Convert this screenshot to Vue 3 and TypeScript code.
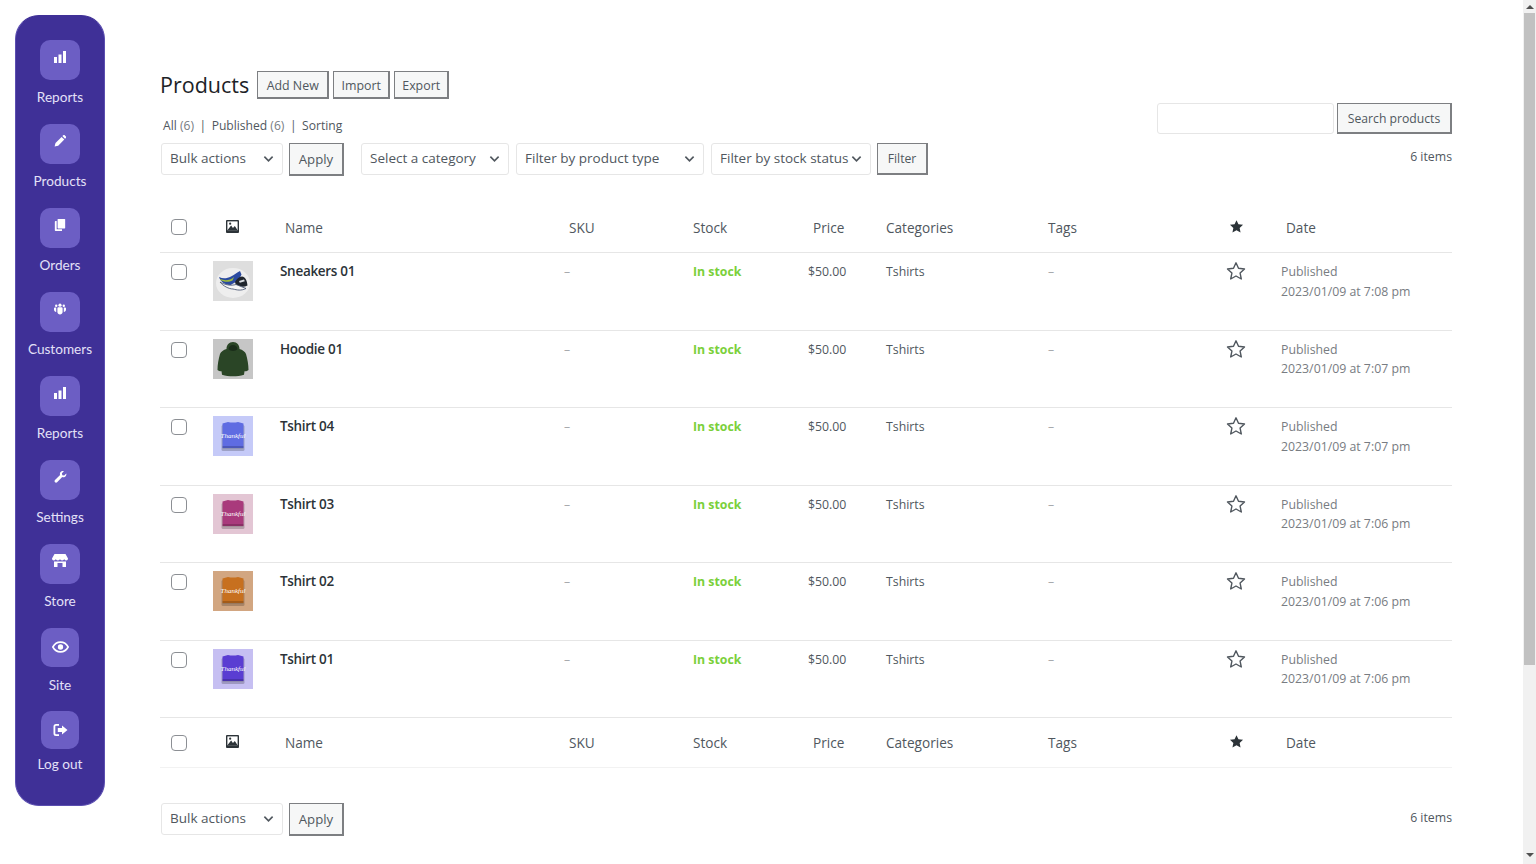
<script setup lang="ts">
interface Product {
  name: string
  date: string
  kind: 'sneaker' | 'hoodie' | 'shirt'
  bg?: string
  shirt?: string
}

const products: Product[] = [
  { name: 'Sneakers 01', date: '2023/01/09 at 7:08 pm', kind: 'sneaker' },
  { name: 'Hoodie 01', date: '2023/01/09 at 7:07 pm', kind: 'hoodie' },
  { name: 'Tshirt 04', date: '2023/01/09 at 7:07 pm', kind: 'shirt', bg: '#c5caf8', shirt: '#5f6ce2' },
  { name: 'Tshirt 03', date: '2023/01/09 at 7:06 pm', kind: 'shirt', bg: '#e3c6d4', shirt: '#a93a7c' },
  { name: 'Tshirt 02', date: '2023/01/09 at 7:06 pm', kind: 'shirt', bg: '#d2a681', shirt: '#c7701f' },
  { name: 'Tshirt 01', date: '2023/01/09 at 7:06 pm', kind: 'shirt', bg: '#c6bff2', shirt: '#5a3dd2' },
]

const nav = [
  { label: 'Reports', icon: 'bars' },
  { label: 'Products', icon: 'pencil' },
  { label: 'Orders', icon: 'copy' },
  { label: 'Customers', icon: 'users' },
  { label: 'Reports', icon: 'bars' },
  { label: 'Settings', icon: 'wrench' },
  { label: 'Store', icon: 'store' },
  { label: 'Site', icon: 'eye' },
  { label: 'Log out', icon: 'logout' },
]
</script>

<template>
  <div class="page">
    <aside class="sidebar">
      <a
        v-for="(item, i) in nav"
        :key="i"
        class="nav-item"
        :class="{ 'nav-store': item.icon === 'store', 'nav-site': item.icon === 'eye', 'nav-logout': item.icon === 'logout' }"
      >
        <span class="nav-btn">
          <svg v-if="item.icon === 'bars'" class="nav-icon" viewBox="0 0 12 12" fill="currentColor">
            <rect x="0" y="6" width="3" height="6" />
            <rect x="4.5" y="3.5" width="3" height="8.5" />
            <rect x="9" y="0" width="3" height="12" />
          </svg>
          <svg v-else-if="item.icon === 'pencil'" class="nav-icon" viewBox="0 0 12 12" fill="currentColor">
            <path d="M7.6 1.9 10.3 4.6 4.2 10.7.6 11.6l.9-3.6zM8.4 1.1l.9-.8c.4-.4 1-.4 1.4 0l1.2 1.2c.4.4.4 1 0 1.400l-.9.9z" />
          </svg>
          <svg v-else-if="item.icon === 'copy'" class="nav-icon" viewBox="0 0 12 13" fill="currentColor">
            <path d="M4 0h7a.6.6 0 0 1 .6.6v9a.6.6 0 0 1-.6.6H4a.6.6 0 0 1-.6-.6V.6A.6.6 0 0 1 4 0z" />
            <path d="M2.4 2.2v9h5.8V13H1.200a.8.8 0 0 1-.8-.8V3c0-.4.3-.8.8-.8z" />
          </svg>
          <svg v-else-if="item.icon === 'users'" class="nav-icon" viewBox="0 0 12 11" fill="currentColor">
            <circle cx="6" cy="1.7" r="1.6" />
            <circle cx="2.2" cy="2.3" r="1.2" />
            <circle cx="9.8" cy="2.3" r="1.2" />
            <path d="M4.3 3.8h3.4c.5 0 .9.4.9.9v3.8c0 1.4-1.2 2.5-2.6 2.5s-2.6-1.100-2.6-2.500V4.700c0-.5.4-.9.9-.9z" />
            <path d="M.8 4h1.400v4.500C1 8.300 0 7.300 0 6V4.800C0 4.400.4 4 .8 4zM11.200 4H9.800v4.500c1.200-.2 2.200-1.200 2.200-2.500V4.800c0-.4-.4-.8-.8-.8z" />
          </svg>
          <svg v-else-if="item.icon === 'wrench'" class="nav-icon nav-icon-lg" viewBox="0 0 12 12" fill="currentColor">
            <path d="M11.8 2.6 9.7 4.6 7.8 4.200 7.400 2.300 9.400.2C7.900-.3 6.300.3 5.700 1.600c-.4.8-.4 1.700-.1 2.400L.5 9.100c-.6.6-.6 1.500 0 2.100.6.6 1.600.6 2.100 0l5.100-5.100c.8.3 1.700.3 2.500-.1 1.300-.7 1.900-2.100 1.600-3.400z" />
          </svg>
          <svg v-else-if="item.icon === 'store'" class="nav-icon nav-icon-store" viewBox="0 0 16 13" fill="currentColor">
            <path d="M2.5 0h11L16 4.500c0 1.100-.8 2-1.900 2-.9 0-1.700-.6-1.900-1.400-.2.8-1 1.400-2.100 1.400S8.200 5.900 8 5.100c-.2.8-1 1.400-2.100 1.400S4 5.900 3.800 5.100C3.600 5.900 2.800 6.500 1.900 6.500 .8 6.500 0 5.600 0 4.500z" />
            <path d="M2 7.500h12V13h-3.500V9h-5v4H2z" />
          </svg>
          <svg v-else-if="item.icon === 'eye'" class="nav-icon nav-icon-eye" viewBox="0 0 16 11" fill="none" stroke="currentColor">
            <path d="M.8 5.500C2.500 2.400 5 .9 8 .9s5.500 1.500 7.200 4.600C13.500 8.600 11 10.100 8 10.100S2.500 8.600.8 5.500z" stroke-width="1.5" />
            <circle cx="8" cy="5.5" r="2.5" fill="currentColor" stroke="none" />
          </svg>
          <svg v-else class="nav-icon nav-icon-out" viewBox="0 0 14 12" fill="currentColor">
            <path d="M5.500 0v1.700H2.800c-.6 0-1 .4-1 1v6.600c0 .6.4 1 1 1h2.700V12H2.500A2.500 2.500 0 0 1 0 9.500v-7A2.500 2.500 0 0 1 2.500 0z" />
            <path d="M8.500 1.400 14 6l-5.500 4.600V7.900H4.300V4.100h4.200z" />
          </svg>
        </span>
        <span class="nav-label">{{ item.label }}</span>
      </a>
    </aside>

    <main class="content">
      <div class="top">
        <div class="top-left">
          <div class="title-row">
            <h1>Products</h1>
            <button class="btn btn-title w-add">Add New</button>
            <button class="btn btn-title w-import">Import</button>
            <button class="btn btn-title w-export">Export</button>
          </div>
          <ul class="views">
            <li class="view">All <span class="count">(6)</span></li>
            <li class="sep">|</li>
            <li class="view">Published <span class="count">(6)</span></li>
            <li class="sep">|</li>
            <li class="view">Sorting</li>
          </ul>
          <div class="filters">
            <select class="select w-bulk"><option>Bulk actions</option></select>
            <button class="btn btn-apply">Apply</button>
            <select class="select w-cat"><option>Select a category</option></select>
            <select class="select w-type"><option>Filter by product type</option></select>
            <select class="select w-stock"><option>Filter by stock status</option></select>
            <button class="btn btn-filter">Filter</button>
          </div>
        </div>
        <div class="top-right">
          <div class="search">
            <input class="search-input" type="search" />
            <button class="btn btn-search">Search products</button>
          </div>
          <div class="items">6 items</div>
        </div>
      </div>

      <div class="table">
        <div class="row head">
          <span class="cell"><span class="check" /></span>
          <span class="cell"><svg class="img-icon" viewBox="0 0 14 14">
            <rect width="14" height="14" rx="1" fill="#2c3338" />
            <rect x="1.5" y="1.5" width="11" height="9.5" fill="#fff" />
            <path d="M1.500 11 5.500 6 7.500 8.500 9.500 6.500 12.500 11z" fill="#2c3338" />
            <circle cx="4.5" cy="4" r="1.2" fill="#2c3338" />
          </svg></span>
          <span class="cell pad">Name</span>
          <span class="cell pad">SKU</span>
          <span class="cell">Stock</span>
          <span class="cell pad">Price</span>
          <span class="cell">Categories</span>
          <span class="cell">Tags</span>
          <span class="cell"><svg class="head-star" viewBox="0 0 20 20"><path d="M10 1.500l2.600 5.600 6.100.7-4.500 4.200 1.200 6-5.400-3-5.400 3 1.200-6L1.300 7.800l6.100-.7z" fill="#2c3338" /></svg></span>
          <span class="cell pad">Date</span>
        </div>

        <div v-for="p in products" :key="p.name" class="row item">
          <span class="cell"><span class="check" /></span>
          <span class="cell">
            <svg class="thumb" viewBox="0 0 40 40">
              <template v-if="p.kind === 'sneaker'">
                <rect width="40" height="40" fill="#dedede" />
                <ellipse cx="20" cy="22" rx="17" ry="15" fill="#eeeeee" />
                <path d="M6 16c4 2 8 1.500 12-.5 3-1.500 6-4 9-5.500l1.500 3.500-3 6-8 4.500c-5 0-10-3-11.500-8z" fill="#2b4aa0" />
                <path d="M7 18c5 2 10 1.500 14-2l-1.500 3.500c-4 2-9 1.500-12-.5z" fill="#9dbb3a" />
                <path d="M22 21c1.500-3 4-5.500 7-5.500 3 0 5 3.500 5.500 9-3 1.500-6 1.500-8 .5-2.500 0-4-1-4.500-4z" fill="#20262e" />
                <path d="M26 20l5-1.500 .8 1.800-5 1.500z" fill="#d9dde2" />
                <path d="M7 21c5 3 11 4 16 2.500l10 4c-5 2.500-9 1.500-13 .5-4 0-10-3-13-7z" fill="#f7f7f7" stroke="#3c4a6a" stroke-width=".8" />
              </template>
              <template v-else-if="p.kind === 'hoodie'">
                <rect width="40" height="40" fill="#c6c6c6" />
                <path d="M20 3c4 0 6.500 3 6.500 7 3 1 5.500 2.500 6.500 5 1.500 5 2.500 11 2.500 16-1.300 1.200-2.800 1.500-4 1.200l-.5 3.500c-7 2-15 2-22 0l-.5-3.500c-1.200.3-2.700 0-4-1.200C4.500 26 5.500 20 7 15c1-2.500 3.500-4 6.500-5C13.500 6 16 3 20 3z" fill="#2a4526" />
                <path d="M15.500 10C17 12.500 23 12.500 24.500 10c-.5-2.500-2-4-4.500-4s-4 1.500-4.500 4z" fill="#1a2d1a" />
              </template>
              <template v-else>
                <rect width="40" height="40" :fill="p.bg" />
                <rect x="8.5" y="9" width="23" height="26" rx="1.5" fill="#000" opacity=".2" />
                <path d="M9.500 7.500 15 6c3 .8 7 .8 10 0l5.500 1.500V32h-21z" :fill="p.shirt" />
                <rect x="9.5" y="30" width="21" height="2.500" fill="#000" opacity=".18" />
                <text x="20" y="21.500" class="shirt-text" text-anchor="middle">Thankful</text>
              </template>
            </svg>
          </span>
          <span class="cell name">{{ p.name }}</span>
          <span class="cell txt dash">–</span>
          <span class="cell txt stock">In stock</span>
          <span class="cell txt">$50.00</span>
          <span class="cell txt">Tshirts</span>
          <span class="cell txt dash">–</span>
          <span class="cell"><svg class="star" viewBox="0 0 20 20"><path d="M10 1.800l2.500 5.500 6 .7-4.400 4.100 1.200 5.900-5.300-3-5.300 3 1.200-5.900L1.500 8l6-.7z" fill="none" stroke="#50575e" stroke-width="1.400" stroke-linejoin="round" /></svg></span>
          <span class="cell txt date"><span>Published</span><span>{{ p.date }}</span></span>
        </div>

        <div class="row head foot">
          <span class="cell"><span class="check" /></span>
          <span class="cell"><svg class="img-icon" viewBox="0 0 14 14">
            <rect width="14" height="14" rx="1" fill="#2c3338" />
            <rect x="1.5" y="1.5" width="11" height="9.5" fill="#fff" />
            <path d="M1.500 11 5.500 6 7.500 8.500 9.500 6.500 12.500 11z" fill="#2c3338" />
            <circle cx="4.5" cy="4" r="1.2" fill="#2c3338" />
          </svg></span>
          <span class="cell pad">Name</span>
          <span class="cell pad">SKU</span>
          <span class="cell">Stock</span>
          <span class="cell pad">Price</span>
          <span class="cell">Categories</span>
          <span class="cell">Tags</span>
          <span class="cell"><svg class="head-star" viewBox="0 0 20 20"><path d="M10 1.500l2.600 5.600 6.100.7-4.500 4.200 1.200 6-5.400-3-5.400 3 1.200-6L1.300 7.800l6.100-.7z" fill="#2c3338" /></svg></span>
          <span class="cell pad">Date</span>
        </div>
      </div>

      <div class="bottom">
        <div class="filters-bottom">
          <select class="select w-bulk"><option>Bulk actions</option></select>
          <button class="btn btn-apply">Apply</button>
        </div>
        <div class="items">6 items</div>
      </div>
    </main>

    <div class="scrollbar">
      <span class="arrow arrow-up" />
      <div class="thumb-bar" />
      <span class="arrow arrow-down" />
    </div>
  </div>
</template>

<style>
html,
body {
  margin: 0;
  height: 100%;
  overflow: hidden;
  background: #fff;
}
</style>

<style scoped>
.page {
  display: flex;
  height: 864px;
  overflow: hidden;
  font-family: "Open Sans", "Noto Sans", sans-serif;
  font-size: 12.3px;
  color: #50575e;
}

/* sidebar */
.sidebar {
  flex: none;
  display: flex;
  flex-direction: column;
  align-items: center;
  box-sizing: border-box;
  width: 90px;
  height: 791px;
  margin: 15px 0 0 15px;
  padding-top: 24px;
  background: #3f3097;
  border-radius: 24px;
  border: 1px solid #5b4eb0;
  border-top-color: #3f3097;
}

.nav-item {
  display: flex;
  flex-direction: column;
  align-items: center;
  height: 84px;
}

.nav-btn {
  display: flex;
  justify-content: center;
  padding-top: 11px;
  box-sizing: border-box;
  width: 40px;
  height: 40px;
  border-radius: 10px;
  background: #6c5ec4;
  color: #fff;
}

.nav-icon {
  width: 12px;
  height: 12px;
}

.nav-icon-lg {
  width: 13px;
  height: 12px;
}

.nav-icon-store {
  width: 16px;
  height: 13px;
}

.nav-icon-eye {
  width: 17px;
  height: 12px;
}

.nav-icon-out {
  width: 15px;
  height: 12px;
}

.nav-label {
  margin-top: 7px;
  font-family: Lato, "Open Sans", sans-serif;
  font-size: 13.6px;
  line-height: 20px;
  color: #e4e0f7;
}

.nav-store .nav-btn {
  padding-top: 10px;
}

.nav-site {
  height: 83px;
}

.nav-site .nav-btn {
  width: 38px;
  height: 39px;
  padding-top: 13px;
}

.nav-site .nav-label {
  margin-top: 8px;
}

.nav-logout .nav-btn {
  width: 38px;
  height: 38px;
  padding-top: 13px;
}

.nav-logout .nav-label {
  margin-top: 5px;
}

/* main */
.content {
  flex: none;
  width: 1292px;
  margin-left: 55px;
  padding-top: 71px;
}

.top {
  display: flex;
  justify-content: space-between;
}

.title-row {
  display: flex;
  align-items: center;
  height: 28px;
}

h1 {
  margin: 0 8px 2px 0;
  font-size: 21.5px;
  font-weight: 400;
  color: #1d2327;
}

.btn {
  box-sizing: border-box;
  padding: 0;
  font-family: inherit;
  font-size: 12.2px;
  color: #50575e;
  background: #f6f7f7;
  border: 2px solid #7d7f82;
  border-width: 1px 2px 2px 1px;
}

.btn-title {
  height: 28px;
  margin-right: 4px;
  padding-top: 2px;
  font-size: 12.4px;
}

.w-add {
  width: 72px;
}

.w-import {
  width: 57px;
}

.w-export {
  width: 55px;
}

.views {
  display: flex;
  align-items: center;
  gap: 5.5px;
  height: 20px;
  margin: 16px 0 0;
  padding: 0 0 0 3px;
  font-size: 12.1px;
  list-style: none;
}

.view {
  color: #50575e;
}

.count {
  color: #787c82;
}

.sep {
  color: #50575e;
}

.filters {
  display: flex;
  align-items: center;
  margin-top: 8px;
  height: 32px;
}

.filters-bottom {
  display: flex;
  align-items: center;
  height: 32px;
}

.select {
  appearance: none;
  box-sizing: border-box;
  height: 32px;
  padding: 0 20px 2px 8px;
  font-family: inherit;
  font-size: 13.5px;
  color: #50575e;
  border: 1px solid #e6e6e6;
  border-radius: 3px;
  background: #fff url("data:image/svg+xml,%3Csvg xmlns='http://www.w3.org/2000/svg' viewBox='0 0 12 8'%3E%3Cpath d='M1.500 1.500 6 6l4.500-4.500' fill='none' stroke='%2350575e' stroke-width='1.800'/%3E%3C/svg%3E") no-repeat right 8px center / 11px 8px;
}

.w-bulk {
  width: 122px;
  margin-left: 1px;
}

.w-cat {
  width: 148px;
  margin-left: 17px;
}

.w-type {
  width: 188px;
  margin-left: 7px;
}

.w-stock {
  width: 160px;
  margin-left: 7px;
}

.btn-apply {
  width: 55px;
  height: 33px;
  margin-left: 6px;
  font-size: 13.2px;
}

.btn-filter {
  width: 51px;
  height: 32px;
  margin-left: 6px;
}

.top-right {
  display: flex;
  flex-direction: column;
  align-items: flex-end;
  padding-top: 32px;
}

.search {
  display: flex;
  gap: 3px;
}

.search-input {
  box-sizing: border-box;
  width: 177px;
  height: 31px;
  border: 1px solid #e6e6e6;
  border-radius: 3px;
  background: #fff;
}

.btn-search {
  width: 115px;
  height: 31px;
}

.items {
  margin-top: 13px;
  line-height: 20px;
}

/* table */
.table {
  margin-top: 28px;
}

.row {
  display: grid;
  grid-template-columns: 53px 67px 284px 129px 115px 78px 162px 178px 55px 171px;
}

.cell {
  display: block;
  min-width: 0;
}

.head {
  box-sizing: border-box;
  height: 50px;
  align-items: center;
  font-size: 13.6px;
  border-bottom: 1px solid #e6e6e6;
}

.head .check {
  margin-top: -1px;
}

.foot {
  border-bottom-color: #f2f2f2;
}

.foot .check {
  margin-top: 0;
}

.pad {
  padding-left: 5px;
}

.item {
  box-sizing: border-box;
  height: 77.5px;
  padding-top: 8px;
  line-height: 20px;
  border-bottom: 1px solid #e6e6e6;
}

.txt {
  margin-top: 1px;
}

.check {
  display: block;
  box-sizing: border-box;
  width: 16px;
  height: 16px;
  margin-left: 11px;
  background: #fff;
  border: 1px solid #8c8f94;
  border-radius: 4px;
}

.item .check {
  margin-top: 3px;
}

.thumb {
  display: block;
  width: 40px;
  height: 40px;
}

.shirt-text {
  font-family: "Liberation Serif", serif;
  font-style: italic;
  font-size: 7px;
  fill: #fff;
}

.img-icon {
  display: block;
  width: 13px;
  height: 13px;
  margin: -2px 0 0 13px;
}

.head-star {
  display: block;
  width: 15px;
  height: 15px;
  margin: -2px 0 0 3px;
}

.star {
  display: block;
  width: 20px;
  height: 20px;
}

.name {
  font-size: 13.5px;
  font-weight: 600;
  letter-spacing: -0.3px;
  color: #2c3338;
}

.dash {
  color: #a7aaad;
}

.stock {
  font-weight: 700;
  color: #7ad03a;
}

.date {
  display: flex;
  flex-direction: column;
  line-height: 19.5px;
  color: #787c82;
}

.bottom {
  display: flex;
  justify-content: space-between;
  align-items: center;
  margin-top: 35px;
}

.bottom .items {
  margin-top: -3px;
}

/* browser scrollbar at the right edge of the window */
.scrollbar {
  flex: none;
  display: flex;
  flex-direction: column;
  align-items: center;
  box-sizing: border-box;
  width: 13px;
  height: 864px;
  margin-left: auto;
  padding-top: 5px;
  background: #f1f1f1;
}

.arrow {
  flex: none;
  width: 0;
  height: 0;
  border-left: 4px solid transparent;
  border-right: 4px solid transparent;
}

.arrow-up {
  border-bottom: 4px solid #505050;
}

.arrow-down {
  margin-top: 188px;
  border-top: 4px solid #505050;
}

.thumb-bar {
  flex: none;
  width: 11px;
  height: 652px;
  margin-top: 4px;
  background: #c1c1c1;
}
</style>
